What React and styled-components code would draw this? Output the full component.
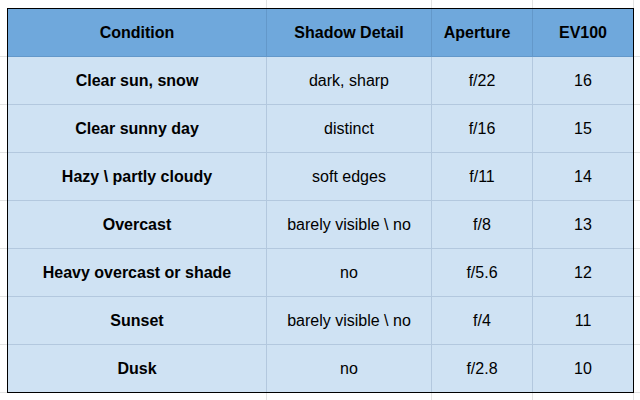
import React from 'react';
import styled, { createGlobalStyle } from 'styled-components';

const GlobalStyle = createGlobalStyle`
  * { box-sizing: border-box; }
  body {
    margin: 0;
    background: #ffffff;
    font-family: "Liberation Sans", Arial, sans-serif;
  }
`;

const COLS = [259, 165, 101, 100];
const GRID = '#e2e3e3';

const rows = [
  ['Clear sun, snow', 'dark, sharp', 'f/22', '16'],
  ['Clear sunny day', 'distinct', 'f/16', '15'],
  ['Hazy \\ partly cloudy', 'soft edges', 'f/11', '14'],
  ['Overcast', 'barely visible \\ no', 'f/8', '13'],
  ['Heavy overcast or shade', 'no', 'f/5.6', '12'],
  ['Sunset', 'barely visible \\ no', 'f/4', '11'],
  ['Dusk', 'no', 'f/2.8', '10'],
];

const Sheet = styled.div`
  width: 640px;
  height: 400px;
  overflow: hidden;
  display: flex;
  flex-direction: column;
`;

const Strip = styled.div`
  display: flex;
  height: ${p => p.$h}px;
  flex-shrink: 0;
`;

const Spacer = styled.div`
  width: ${p => p.$w}px;
  flex-shrink: 0;
`;

const GridCell = styled.div`
  width: ${p => p.$w}px;
  flex-shrink: 0;
  border-right: 1px solid ${GRID};
`;

const Middle = styled.div`
  display: flex;
  align-items: flex-start;
`;

const Side = styled.div`
  width: ${p => (p.$grow ? 'auto' : `${p.$w}px`)};
  flex: ${p => (p.$grow ? 1 : '0 0 auto')};
  display: flex;
  flex-direction: column;
  padding-top: 1px;
`;

const SideCell = styled.div`
  height: 48px;
  border-bottom: 1px solid ${GRID};
`;

const Table = styled.div`
  display: grid;
  grid-template-columns: ${COLS.map(c => `${c}px`).join(' ')};
  border: 1px solid #000;
`;

const Cell = styled.div`
  height: ${p => (p.$last ? 47 : 48)}px;
  display: flex;
  align-items: center;
  justify-content: center;
  background: ${p => (p.$head ? '#6fa8dc' : '#cfe2f3')};
  border-right: ${p => (p.$edge ? 'none' : '1px solid rgba(40, 70, 110, 0.16)')};
  border-bottom: ${p => (p.$last ? 'none' : '1px solid rgba(40, 70, 110, 0.16)')};
  font-size: 16px;
  font-weight: ${p => (p.$bold ? 700 : 400)};
  color: #000;
  white-space: nowrap;
  padding-top: 1px;
  padding-right: ${p => p.$indent || 0}px;
`;

const ColumnStrip = ({ h }) => (
  <Strip $h={h}>
    <Spacer $w={8} />
    {COLS.map((w, i) => (
      <GridCell key={i} $w={i === 3 ? w + 1 : w} />
    ))}
  </Strip>
);

const head = [
  { t: 'Condition' },
  { t: 'Shadow Detail' },
  { t: 'Aperture', indent: 10 },
  { t: 'EV100' },
];

export default function App() {
  return (
    <>
      <GlobalStyle />
      <Sheet>
        <ColumnStrip h={8} />
        <Middle>
          <Side $w={7}>
            {Array.from({ length: 8 }).map((_, i) => <SideCell key={i} />)}
          </Side>
          <Table>
            {head.map((h, i) => (
              <Cell key={h.t} $head $bold $edge={i === 3} $indent={h.indent}>{h.t}</Cell>
            ))}
            {rows.map((r, ri) =>
              r.map((t, ci) => (
                <Cell
                  key={`${ri}-${ci}`}
                  $bold={ci === 0}
                  $edge={ci === 3}
                  $last={ri === rows.length - 1}
                >
                  {t}
                </Cell>
              ))
            )}
          </Table>
          <Side $grow>
            {Array.from({ length: 8 }).map((_, i) => <SideCell key={i} />)}
          </Side>
        </Middle>
        <ColumnStrip h={40} />
      </Sheet>
    </>
  );
}
